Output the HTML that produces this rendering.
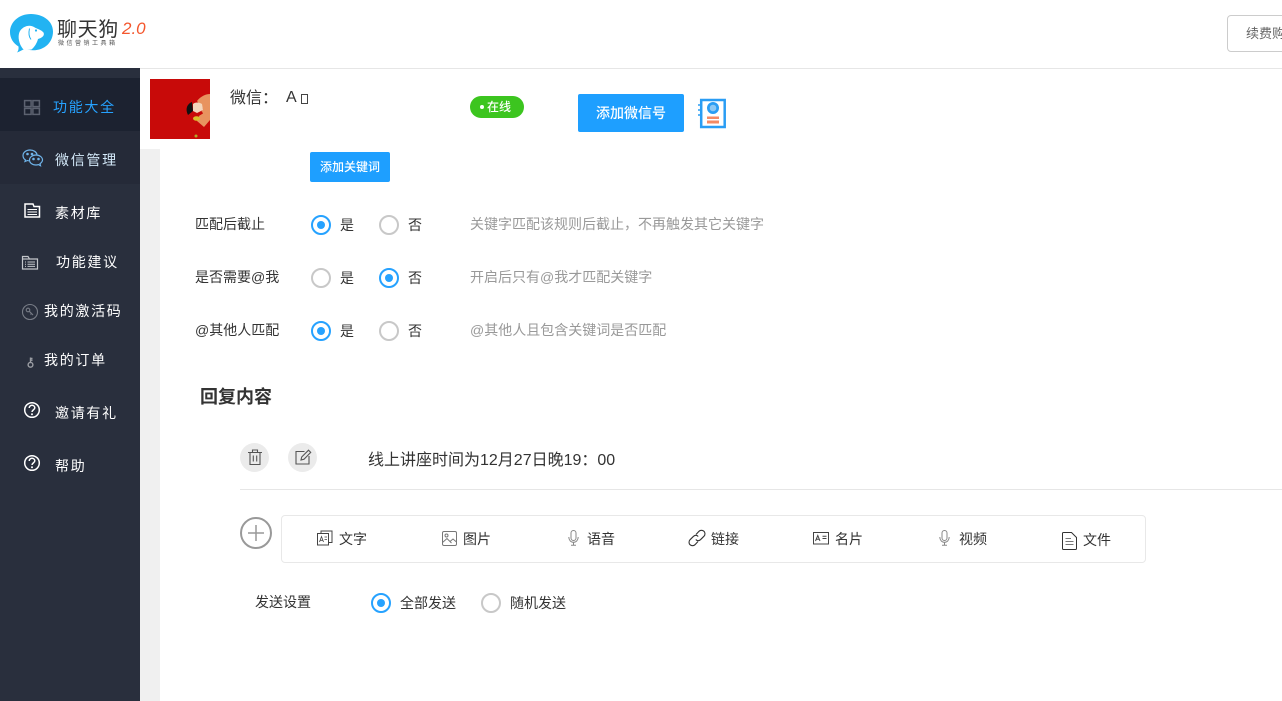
<!DOCTYPE html>
<html lang="zh"><head><meta charset="utf-8"><title>聊天狗</title>
<style>
html,body{margin:0;padding:0;width:1282px;height:701px;overflow:hidden;background:#fff}
body{position:relative;font-family:"Liberation Sans","Noto Sans CJK SC",sans-serif;color:#333}
.a{position:absolute}
.t{position:absolute;white-space:nowrap;line-height:20px;height:20px}
.m{color:#fff;font-size:14px;letter-spacing:1.7px}
.l{font-size:14px;color:#333}
.h{font-size:14px;color:#999}
.r{position:absolute;width:16px;height:16px;border:2px solid #c8c8c8;border-radius:50%;background:#fff}
.r.on{border-color:#26a2ff}
.r.on:after{content:"";position:absolute;left:4px;top:4px;width:8px;height:8px;border-radius:50%;background:#26a2ff}
svg{position:absolute;overflow:visible}
.tb{font-size:14px;color:#333}
</style></head><body>
<!-- header -->
<div class="a" style="left:0;top:68px;width:1282px;height:1px;background:#e6e6e6"></div>
<svg style="left:0;top:0" width="60" height="60" viewBox="0 0 60 60">
<path d="M17 52.500C20 51.500 22.500 50 24.500 48.800C27 49.800 30 50.300 33 50.300C45 50.300 53 42 53 31.500C53 21 43 14 31 14C19 14 10 22 10 32C10 38 13 43 18.500 46.500C18.800 49 18.300 51 17 52.500Z" fill="#22b3f2"/>
<path d="M23 49C19 44 17.500 37 19.500 32C22 26.500 29.500 24 34 27C37 29 41 29.500 43.500 32.500C45 35.500 42 38 38 39C37 43 34.500 47 31.500 49.500C28.500 50 25.500 50 23 49Z" fill="#fff"/>
<path d="M29.500 28.500C28.500 33 29 37 31 39.500" fill="none" stroke="#22b3f2" stroke-width="1"/>
<circle cx="36" cy="30.500" r="1.100" fill="#22b3f2"/>
</svg>
<div class="t" style="left:57px;top:18px;height:24px;line-height:24px;font-size:20px;letter-spacing:.6px;color:#333">聊天狗</div>
<div class="t" style="left:122px;top:17px;height:24px;line-height:24px;font-size:17px;font-style:italic;color:#f4572e">2.0</div>
<div class="t" style="left:58px;top:39px;height:10px;line-height:10px;font-size:6px;letter-spacing:2.500px;color:#555">微信营销工具箱</div>
<div class="a" style="left:1227px;top:15px;width:70px;height:37px;border:1px solid #ccc;border-radius:4px;box-sizing:border-box"></div>
<div class="t" style="left:1246px;top:24px;font-size:13px;color:#666">续费购买</div>
<!-- sidebar -->
<div class="a" style="left:0;top:68px;width:140px;height:633px;background:#292f3d"></div>
<div class="a" style="left:0;top:78px;width:140px;height:53px;background:#1c2230"></div>
<div class="a" style="left:0;top:131px;width:140px;height:53px;background:#252a38"></div>
<div class="a" style="left:140px;top:149px;width:20px;height:552px;background:#f0f0f0"></div>
<svg style="left:24px;top:100px" width="16" height="15" viewBox="0 0 16 15" fill="none" stroke="#5c6270" stroke-width="1.500"><rect x=".6" y=".6" width="6.500" height="6"/><rect x="8.900" y=".6" width="6.500" height="6"/><rect x=".6" y="8.400" width="6.500" height="6"/><rect x="8.900" y="8.400" width="6.500" height="6"/></svg>
<div class="t m" style="left:53px;top:97px;color:#26a2ff">功能大全</div>
<svg style="left:22px;top:149px" width="21" height="18" viewBox="0 0 21 18" fill="none" stroke="#6fb4ea" stroke-width="1.200"><path d="M8 1C4 1 1 3.500 1 6.500C1 8.500 2 10 3.500 11L3 12.500L5.500 11.500C6 11.700 6.500 11.800 7 11.800"/><path d="M14 6C10.500 6 7.500 8.200 7.500 11C7.500 14 10.500 16 14 16C15 16 15.700 15.900 16.500 15.600L18.500 16.700L18 14.700C19.400 13.700 20.500 12.500 20.500 11C20.500 8.200 17.500 6 14 6Z"/><path d="M15 5.500C14.500 3 11.500 1 8 1"/><circle cx="5.500" cy="5" r=".7" fill="#6fb4ea"/><circle cx="10" cy="5" r=".7" fill="#6fb4ea"/><circle cx="11.500" cy="10" r=".7" fill="#6fb4ea"/><circle cx="16.500" cy="10" r=".7" fill="#6fb4ea"/></svg>
<div class="t m" style="left:55px;top:150px;color:#d3e8f8">微信管理</div>
<svg style="left:24px;top:203px" width="16" height="15" viewBox="0 0 16 15" fill="none" stroke="#fff" stroke-width="1.500"><path d="M1 14V1H9L10 3.500H15.500V14Z"/><path d="M3.500 6.500H13M3.500 9H13M3.500 11.500H13" stroke-width="1.100"/></svg>
<div class="t m" style="left:55px;top:203px">素材库</div>
<svg style="left:22px;top:255px" width="16" height="15" viewBox="0 0 16 15" fill="none" stroke="#c4c7cc" stroke-width="1.200"><path d="M.5 14V1.500H6L7.500 4H15.500V14Z"/><path d="M.5 4H7.500"/><path d="M3 7H4M5.500 7H13M3 9.200H4M5.500 9.200H13M3 11.400H4M5.500 11.400H13" stroke-width="1"/></svg>
<div class="t m" style="left:56px;top:252px">功能建议</div>
<svg style="left:22px;top:304px" width="16" height="16" viewBox="0 0 16 16" fill="none" stroke="#777c86" stroke-width="1.100"><circle cx="8" cy="8" r="7.500"/><circle cx="6" cy="6" r="1.800"/><path d="M7.300 7.300L11 11M9.500 9.500L8.500 10.500"/></svg>
<div class="t m" style="left:44px;top:301px">我的激活码</div>
<svg style="left:27px;top:357px" width="7" height="11" viewBox="0 0 7 11" fill="none" stroke="#9a9da3" stroke-width="1.400"><circle cx="3.500" cy="7.800" r="2.400"/><path d="M3.500 5V.5M3.500 1.500H5.500M3.500 3.200H5.500"/></svg>
<div class="t m" style="left:44px;top:350px">我的订单</div>
<svg style="left:24px;top:402px" width="16" height="16" viewBox="0 0 16 16" fill="none" stroke="#fff" stroke-width="1.500"><circle cx="8" cy="8" r="7.300"/><path d="M5.200 6C5.200 4.300 6.500 3.300 8 3.300C9.600 3.300 10.800 4.400 10.800 5.800C10.800 7.800 8 8 8 10"/><circle cx="8" cy="12.300" r="1" fill="#fff" stroke="none"/></svg>
<div class="t m" style="left:55px;top:403px">邀请有礼</div>
<svg style="left:24px;top:455px" width="16" height="16" viewBox="0 0 16 16" fill="none" stroke="#fff" stroke-width="1.500"><circle cx="8" cy="8" r="7.300"/><path d="M5.200 6C5.200 4.300 6.500 3.300 8 3.300C9.600 3.300 10.800 4.400 10.800 5.800C10.800 7.800 8 8 8 10"/><circle cx="8" cy="12.300" r="1" fill="#fff" stroke="none"/></svg>
<div class="t m" style="left:55px;top:456px">帮助</div>
<!-- top account -->
<svg style="left:150px;top:79px" width="60" height="60" viewBox="0 0 60 60">
<rect width="60" height="60" fill="#c80a09"/>
<path d="M47 22C51 17 56 15 60 15V41L54 48L47 42L50 35L53 30Z" fill="#e8935f"/>
<path d="M43 25C45 23 49 23 52 25L53 31L47 34L43 32Z" fill="#f3d6bb"/>
<path d="M42 23C37 25 35 30 38 36L43 32Z" fill="#111"/>
<path d="M45 36L52 32.500L53 34.500L47 38Z" fill="#c80a09"/>
<ellipse cx="46.500" cy="39.500" rx="3.500" ry="2.300" fill="#d9bf2a"/>
<circle cx="46" cy="57" r="1.500" fill="#b3a52a"/>
</svg>
<div class="t" style="left:230px;top:89px;font-size:16px;color:#333">微信：</div>
<div class="t" style="left:286px;top:88px;font-size:16px;color:#333">A</div>
<div class="a" style="left:301px;top:94px;width:7px;height:10px;box-sizing:border-box;border:1px solid #444"></div>
<div class="a" style="left:470px;top:96px;width:54px;height:22px;border-radius:11px;background:#3cc51f"></div>
<div class="a" style="left:480px;top:105px;width:4px;height:4px;border-radius:50%;background:#fff"></div>
<div class="t" style="left:487px;top:97px;font-size:12px;font-weight:500;color:#fff">在线</div>
<div class="a" style="left:578px;top:94px;width:106px;height:38px;border-radius:2px;background:#1e9fff"></div>
<div class="t" style="left:596px;top:103px;font-size:14px;font-weight:500;color:#fff">添加微信号</div>
<svg style="left:698px;top:98px" width="28" height="30" viewBox="0 0 28 30">
<rect x="3.200" y="2" width="23.500" height="27" fill="#fff" stroke="#2a9df4" stroke-width="2.500"/>
<path d="M0 7H3M0 12H3M0 17H3" stroke="#2a9df4" stroke-width="1.500"/>
<circle cx="15" cy="10" r="6" fill="#2a9df4"/><circle cx="15" cy="10" r="3.300" fill="#8cc8f5"/>
<rect x="9" y="18.500" width="12" height="2.500" fill="#f58a64"/><rect x="9" y="22.500" width="12" height="3" fill="#f58a64"/>
</svg>
<div class="a" style="left:310px;top:152px;width:80px;height:30px;border-radius:2px;background:#1e9fff"></div>
<div class="t" style="left:320px;top:157px;font-size:12px;font-weight:500;color:#fff">添加关键词</div>
<!-- rows -->
<div class="t l" style="left:195px;top:214px">匹配后截止</div>
<div class="r on" style="left:311px;top:215px"></div><div class="t l" style="left:340px;top:215px">是</div>
<div class="r" style="left:379px;top:215px"></div><div class="t l" style="left:408px;top:215px">否</div>
<div class="t h" style="left:470px;top:214px">关键字匹配该规则后截止，不再触发其它关键字</div>
<div class="t l" style="left:195px;top:267px">是否需要@我</div>
<div class="r" style="left:311px;top:268px"></div><div class="t l" style="left:340px;top:268px">是</div>
<div class="r on" style="left:379px;top:268px"></div><div class="t l" style="left:408px;top:268px">否</div>
<div class="t h" style="left:470px;top:267px">开启后只有@我才匹配关键字</div>
<div class="t l" style="left:195px;top:320px">@其他人匹配</div>
<div class="r on" style="left:311px;top:321px"></div><div class="t l" style="left:340px;top:321px">是</div>
<div class="r" style="left:379px;top:321px"></div><div class="t l" style="left:408px;top:321px">否</div>
<div class="t h" style="left:470px;top:320px">@其他人且包含关键词是否匹配</div>
<div class="t" style="left:200px;top:387px;font-size:18px;font-weight:bold;color:#333">回复内容</div>
<!-- content -->
<div class="a" style="left:240px;top:443px;width:29px;height:29px;border-radius:50%;background:#ebebeb"></div>
<svg style="left:247px;top:449px" width="16" height="17" viewBox="0 0 16 17" fill="none" stroke="#555" stroke-width="1.100"><path d="M1 3.500H15M5.500 3.500V1H10.500V3.500M3 3.500V15.500H13V3.500M6.300 6.500V12.500M9.700 6.500V12.500"/></svg>
<div class="a" style="left:288px;top:443px;width:29px;height:29px;border-radius:50%;background:#ebebeb"></div>
<svg style="left:295px;top:449px" width="17" height="16" viewBox="0 0 17 16" fill="none" stroke="#555" stroke-width="1.100"><path d="M9.500 2.500H1V15H14V7"/><path d="M6 11L6.700 8L13.500 1.200L15.700 3.400L9 10.200Z"/></svg>
<div class="t" style="left:368px;top:451px;font-size:16px;color:#333">线上讲座时间为12月27日晚19：00</div>
<div class="a" style="left:240px;top:489px;width:1042px;height:1px;background:#e6e6e6"></div>
<svg style="left:240px;top:517px" width="32" height="32" viewBox="0 0 32 32" fill="none" stroke="#999" stroke-width="2"><circle cx="16" cy="16" r="15"/><path d="M8 16H24M16 8V24" stroke-width="1.500"/></svg>
<div class="a" style="left:281px;top:515px;width:865px;height:48px;box-sizing:border-box;border:1px solid #e8e8e8;border-radius:4px"></div>
<svg style="left:317px;top:530px" width="16" height="16" viewBox="0 0 16 16" fill="none" stroke="#444" stroke-width="1"><rect x=".5" y="3.500" width="11" height="11.500"/><path d="M4 3.500V1H15V12.500H11.500"/><path d="M2.500 12L4.500 6.500L6.500 12M3.200 10.300H5.800M7.500 7H10M7.500 9.500H10" stroke-width=".8"/></svg>
<div class="t tb" style="left:339px;top:529px">文字</div>
<svg style="left:442px;top:531px" width="15" height="15" viewBox="0 0 15 15" fill="none" stroke="#777" stroke-width="1"><rect x=".5" y=".5" width="14" height="14" rx="1.500"/><circle cx="4.500" cy="4.500" r="1.500"/><path d="M.5 11.500L5 7.500L9.500 12M8 10.500L11 8L14.500 11"/></svg>
<div class="t tb" style="left:463px;top:529px">图片</div>
<svg style="left:568px;top:530px" width="11" height="16" viewBox="0 0 11 16" fill="none" stroke="#888" stroke-width="1"><rect x="3" y=".5" width="5" height="10" rx="2.500"/><path d="M.8 7C.8 10 2.800 12.300 5.500 12.300C8.200 12.300 10.200 10 10.200 7M5.500 12.300V15M3 15.300H8"/></svg>
<div class="t tb" style="left:587px;top:529px">语音</div>
<svg style="left:688px;top:529px" width="18" height="18" viewBox="0 0 18 18" fill="none" stroke="#333" stroke-width="1.100"><path d="M8 5.500L11 2.300C12.300 1 14.500 1 16 2.300C17.300 3.700 17.300 5.800 16 7.200L12.500 10.700C11 12 9 12 7.800 10.500"/><path d="M10 12.500L7 15.700C5.700 17 3.500 17 2 15.700C.7 14.300 .7 12.200 2 10.800L5.500 7.300C7 6 9 6 10.200 7.500"/></svg>
<div class="t tb" style="left:711px;top:529px">链接</div>
<svg style="left:813px;top:532px" width="16" height="13" viewBox="0 0 16 13" fill="none" stroke="#444" stroke-width="1"><rect x=".5" y=".5" width="15" height="11.500"/><path d="M2.500 9L4.800 3.500L7 9M3.300 7.300H6.300M9.500 4.300H13.500M9.500 6.500H13.500"/></svg>
<div class="t tb" style="left:835px;top:529px">名片</div>
<svg style="left:939px;top:530px" width="11" height="16" viewBox="0 0 11 16" fill="none" stroke="#888" stroke-width="1"><rect x="3" y=".5" width="5" height="10" rx="2.500"/><path d="M.8 7C.8 10 2.800 12.300 5.500 12.300C8.200 12.300 10.200 10 10.200 7M5.500 12.300V15M3 15.300H8"/></svg>
<div class="t tb" style="left:959px;top:529px">视频</div>
<svg style="left:1062px;top:532px" width="15" height="18" viewBox="0 0 15 18" fill="none" stroke="#333" stroke-width="1"><path d="M.5 1.500Q.5.500 1.500.500H9.500L14.500 5.500V16.500Q14.500 17.500 13.500 17.500H1.500Q.5 17.500 .5 16.500Z"/><path d="M3.500 6.500H9M3.500 9.500H11.500M3.500 12.500H11.500" stroke="#777"/></svg>
<div class="t tb" style="left:1083px;top:530px">文件</div>
<!-- send -->
<div class="t l" style="left:255px;top:592px">发送设置</div>
<div class="r on" style="left:371px;top:593px"></div><div class="t l" style="left:400px;top:593px">全部发送</div>
<div class="r" style="left:481px;top:593px"></div><div class="t l" style="left:510px;top:593px">随机发送</div>
</body></html>
